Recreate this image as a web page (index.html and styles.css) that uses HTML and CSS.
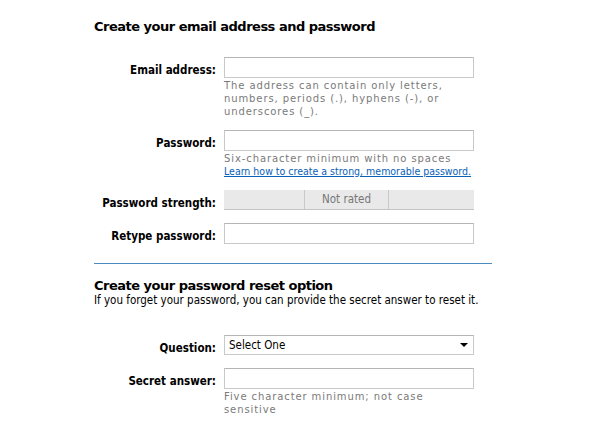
FILE: index.html
```html
<!DOCTYPE html>
<html>
<head>
<meta charset="utf-8">
<link rel="stylesheet" href="styles.css">
</head>
<body>
<div class="page">
  <section class="section first">
    <h2 class="heading">Create your email address and password</h2>
    <div class="form">
      <div class="row">
        <label class="label">Email address:</label>
        <div class="field">
          <div class="input"></div>
          <p class="hint">The address can contain only letters, numbers, periods (.), hyphens (-), or underscores (_).</p>
        </div>
      </div>
      <div class="row">
        <label class="label">Password:</label>
        <div class="field">
          <div class="input"></div>
          <p class="hint">Six-character minimum with no spaces</p>
          <a class="link" href="#">Learn how to create a strong, memorable password.</a>
        </div>
      </div>
      <div class="row strength-row">
        <label class="label">Password strength:</label>
        <div class="field">
          <div class="strength">
            <span class="seg"></span>
            <span class="seg mid">Not rated</span>
            <span class="seg"></span>
          </div>
        </div>
      </div>
      <div class="row">
        <label class="label">Retype password:</label>
        <div class="field">
          <div class="input"></div>
        </div>
      </div>
    </div>
  </section>
  <section class="section second">
    <h2 class="heading">Create your password reset option</h2>
    <p class="sub">If you forget your password, you can provide the secret answer to reset it.</p>
    <div class="form reset">
      <div class="row">
        <label class="label sel-label">Question:</label>
        <div class="field">
          <div class="select"><span class="select-text">Select One</span><span class="arrow"></span></div>
        </div>
      </div>
      <div class="row">
        <label class="label">Secret answer:</label>
        <div class="field">
          <div class="input"></div>
          <p class="hint">Five character minimum; not case sensitive</p>
        </div>
      </div>
    </div>
  </section>
</div>
</body>
</html>
```
FILE: styles.css
```css
html, body {
  margin: 0;
  padding: 0;
  background: #ffffff;
}
.page {
  padding-left: 94px;
  width: 398px;
  font-family: "DejaVu Sans", Verdana, sans-serif;
  color: #000;
}
.section.first {
  padding-top: 19px;
  padding-bottom: 19px;
  border-bottom: 1px solid #4a8cbf;
}
.heading {
  margin: 0;
  font-size: 13px;
  line-height: 16px;
  font-weight: bold;
  letter-spacing: -0.5px;
}
.first .heading {
  margin-bottom: 22px;
}
.section.second {
  padding-top: 14px;
}
.sub {
  margin: 0;
  font-family: "DejaVu Sans Condensed", "DejaVu Sans", sans-serif;
  font-stretch: condensed;
  font-size: 11.5px;
  line-height: 13px;
}
.form {
  display: flex;
  flex-direction: column;
  gap: 12px;
}
.form.reset {
  margin-top: 28px;
  gap: 13px;
}
.row {
  display: grid;
  grid-template-columns: 122px 250px;
  column-gap: 8px;
}
.strength-row {
  margin-bottom: 1px;
}
.label {
  text-align: right;
  font-family: "DejaVu Sans Condensed", "DejaVu Sans", sans-serif;
  font-stretch: condensed;
  font-weight: bold;
  font-size: 11.5px;
  line-height: 14px;
  padding-top: 6px;
  white-space: nowrap;
}
.field {
  display: flex;
  flex-direction: column;
}
.input {
  box-sizing: border-box;
  height: 21px;
  border: 1px solid #c9c9c9;
  border-top-color: #b5b5b5;
  background: #fff;
}
.hint {
  margin: 0;
  max-width: 245px;
  font-size: 10px;
  line-height: 13px;
  letter-spacing: 0.9px;
  color: #7a7a7a;
  padding-top: 1px;
}
.link {
  font-family: "DejaVu Sans Condensed", "DejaVu Sans", sans-serif;
  font-stretch: condensed;
  font-size: 10.5px;
  line-height: 13px;
  color: #0a62b8;
  text-decoration: underline;
}
.strength {
  display: grid;
  grid-template-columns: 81px 84px 85px;
  height: 20px;
  background: #e9e9e9;
  border-bottom: 1px solid #c4c4c4;
  box-sizing: border-box;
}
.seg {
  border-right: 1px solid #c8c8c8;
  font-family: "DejaVu Sans Condensed", "DejaVu Sans", sans-serif;
  font-stretch: condensed;
  font-size: 11.5px;
  line-height: 19px;
  color: #777;
  text-align: center;
}
.seg:last-child {
  border-right: none;
}
.select {
  position: relative;
  box-sizing: border-box;
  height: 20px;
  border: 1px solid #c9c9c9;
  border-top-color: #b5b5b5;
  padding-left: 4px;
  font-family: "DejaVu Sans Condensed", "DejaVu Sans", sans-serif;
  font-stretch: condensed;
  font-size: 11.5px;
  line-height: 18px;
}
.arrow {
  position: absolute;
  right: 5px;
  top: 7px;
  width: 0;
  height: 0;
  border-left: 4px solid transparent;
  border-right: 4px solid transparent;
  border-top: 4px solid #000;
}
```
